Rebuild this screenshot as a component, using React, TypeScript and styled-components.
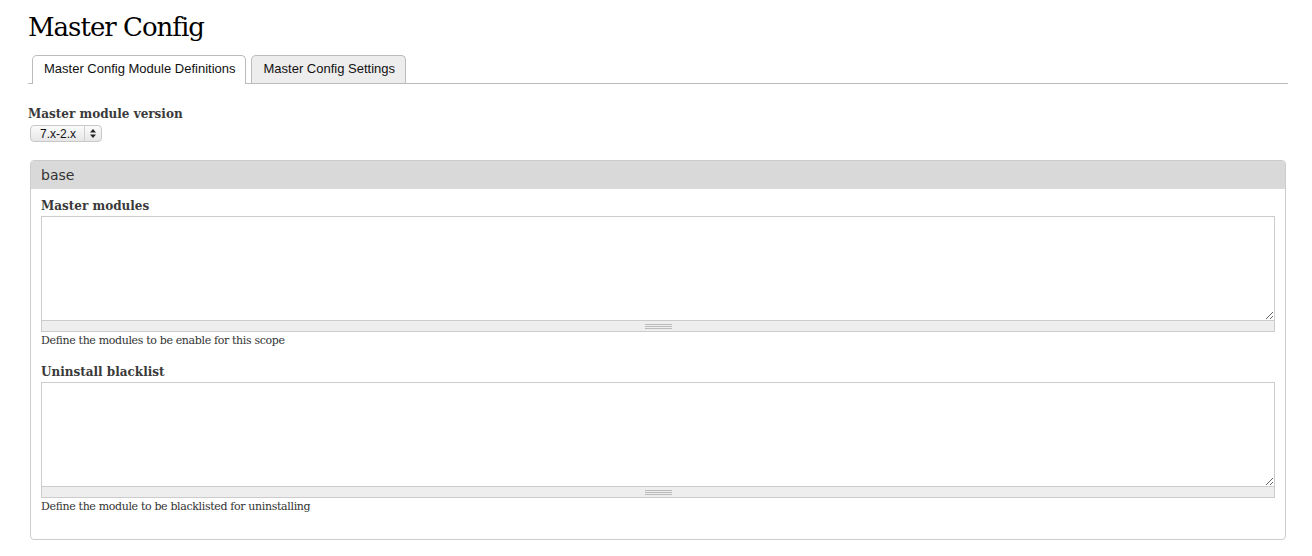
import React from "react";
import styled, { createGlobalStyle } from "styled-components";

const GlobalStyle = createGlobalStyle`
  body {
    margin: 0;
    background: #ffffff;
    font-family: "DejaVu Serif", Georgia, serif;
    color: #333333;
  }
`

const Page = styled.div`
  padding: 10px 24px 0 28px;
`
const Title = styled.h1`
  margin: 0;
  font-family: "DejaVu Serif", Georgia, serif;
  font-weight: normal;
  font-size: 26px;
  line-height: 34px;
  color: #000000;
  letter-spacing: -1px;
`
const TabBar = styled.ul`
  display: flex;
  gap: 5px;
  list-style: none;
  margin: 11px 0 0;
  padding: 0 0 0 4px;
  border-bottom: 1px solid #bbbbbb;
`
const Tab = styled.li<{ $active?: boolean }>`
  box-sizing: border-box;
  padding: 0 10px 3px 11px;
  display: flex;
  align-items: center;
  border: 1px solid #bbbbbb;
  border-bottom: none;
  border-radius: 5px 5px 0 0;
  margin-bottom: ${p => (p.$active ? "-1px" : "0")};
  height: ${p => (p.$active ? "29px" : "28px")};
  background: ${p => (p.$active ? "#ffffff" : "#ededed")};
  font-family: "Liberation Sans", Arial, sans-serif;
  font-size: 13px;
  color: #111111;
`
const VersionField = styled.div`
  margin-top: 22px;
`
const Label = styled.div`
  font-family: "DejaVu Serif", Georgia, serif;
  font-weight: bold;
  font-size: 12px;
  line-height: 16px;
  color: #3a3a3a;
`
const SelectBox = styled.div`
  display: inline-flex;
  align-items: stretch;
  margin: 3px 0 0 2px;
  height: 15px;
  border: 1px solid #c8c8c8;
  border-radius: 4px;
  background: linear-gradient(#fbfbfb, #e6e6e6);
  font-family: "Liberation Sans", Arial, sans-serif;
  font-size: 12px;
  color: #111111;
`
const SelectValue = styled.span`
  display: flex;
  align-items: center;
  padding: 0 8px 0 9px;
  border-right: 1px solid #d0d0d0;
`
const SelectArrows = styled.span`
  display: flex;
  align-items: center;
  justify-content: center;
  width: 16px;
`
const Fieldset = styled.section`
  margin: 18px 2px 0;
  border: 1px solid #cccccc;
  border-radius: 4px;
  overflow: hidden;
`
const Legend = styled.div`
  height: 28px;
  display: flex;
  align-items: center;
  padding-left: 10px;
  background: #d9d9d9;
  font-family: "DejaVu Sans", "Lucida Grande", sans-serif;
  font-size: 14px;
  color: #333333;
`
const FieldsetBody = styled.div`
  padding: 9px 10px 24px;
`
const FormItem = styled.div<{ $first?: boolean }>`
  margin-top: ${p => (p.$first ? "0" : "15px")};
`
const TextArea = styled.textarea`
  display: block;
  box-sizing: border-box;
  width: 100%;
  height: 104px;
  margin-top: 2px;
  border: 1px solid #cccccc;
  border-bottom: none;
  resize: vertical;
  outline: none;
`
const Grippie = styled.div`
  height: 10px;
  display: flex;
  justify-content: center;
  align-items: center;
  background: #eeeeee;
  border: 1px solid #cccccc;
`
const GrippieLines = styled.span`
  width: 27px;
  height: 5px;
  background: repeating-linear-gradient(#bbbbbb 0 1px, transparent 1px 2px);
`
const Description = styled.div`
  font-family: "DejaVu Serif", Georgia, serif;
  font-size: 11px;
  line-height: 16px;
  margin-top: 1px;
  color: #333333;
  letter-spacing: -0.35px;
`

const Arrows: React.FC = () => (
  <svg width="6" height="9" viewBox="0 0 6 9">
    <path d="M3 0 L6 3.5 L0 3.5 Z" fill="#222" />
    <path d="M3 9 L6 5.5 L0 5.5 Z" fill="#222" />
  </svg>
)

const fields = [
  { label: "Master modules", help: "Define the modules to be enable for this scope" },
  { label: "Uninstall blacklist", help: "Define the module to be blacklisted for uninstalling" },
]

const App: React.FC = () => {
  return (
    <>
      <GlobalStyle />
      <Page>
        <Title>Master Config</Title>
        <TabBar>
          <Tab $active>Master Config Module Definitions</Tab>
          <Tab>Master Config Settings</Tab>
        </TabBar>
        <VersionField>
          <Label>Master module version</Label>
          <SelectBox>
            <SelectValue>7.x-2.x</SelectValue>
            <SelectArrows><Arrows /></SelectArrows>
          </SelectBox>
        </VersionField>
        <Fieldset>
          <Legend>base</Legend>
          <FieldsetBody>
            {fields.map((f, index) => (
              <FormItem key={index} $first={index === 0}>
                <Label>{f.label}</Label>
                <TextArea />
                <Grippie><GrippieLines /></Grippie>
                <Description>{f.help}</Description>
              </FormItem>
            ))}
          </FieldsetBody>
        </Fieldset>
      </Page>
    </>
  );
}
export default App;
